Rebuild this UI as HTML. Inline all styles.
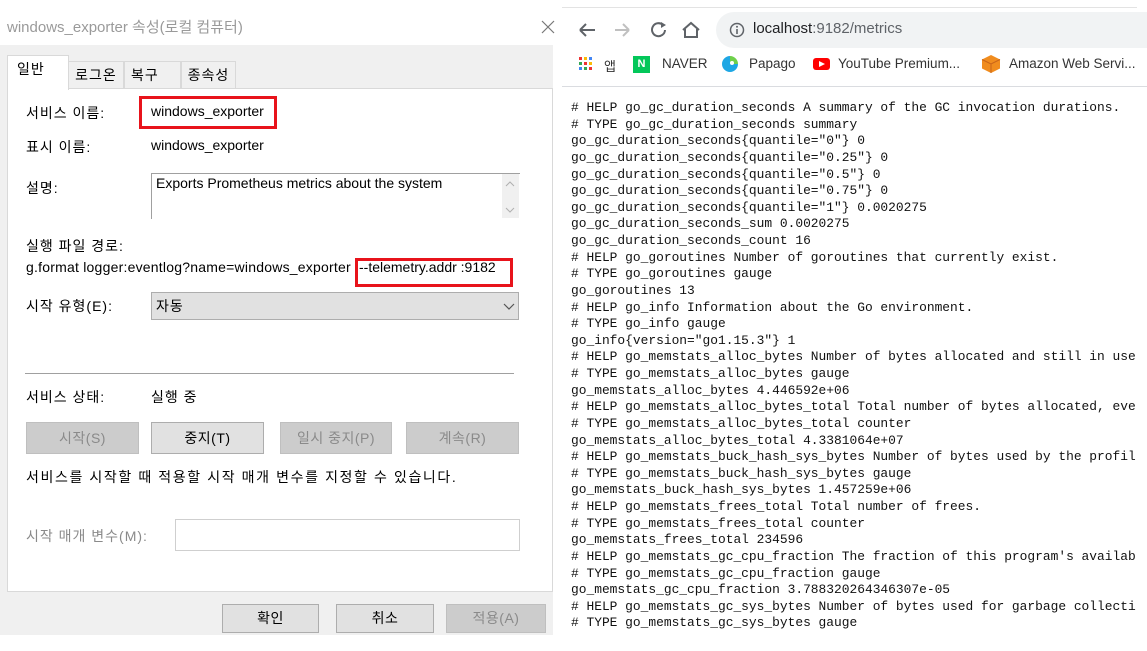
<!DOCTYPE html>
<html><head><meta charset="utf-8"><style>
*{margin:0;padding:0;box-sizing:border-box}
body{width:1147px;height:651px;background:#fff;position:relative;overflow:hidden;font-family:"Liberation Sans","Noto Sans CJK KR",sans-serif;font-size:14px;color:#000}
.a{position:absolute;white-space:nowrap}
.k{letter-spacing:1px}
.btn{position:absolute;height:32px;background:#e1e1e1;border:1px solid #adadad;text-align:center;line-height:30px;font-size:14px;letter-spacing:0.5px}
.dis{background:#cccccc;border-color:#bfbfbf;color:#8a8a8a}
.red{position:absolute;border:3px solid #e8131b}
pre{position:absolute;left:571px;top:100px;font-family:"Liberation Mono",monospace;font-size:12.9px;line-height:16.63px;color:#111}
</style></head><body>
<!-- dialog -->
<div class="a" style="left:0;top:0;width:553px;height:45px;background:#fff"></div>
<div class="a" style="left:7px;top:16px;font-size:15px;color:#9a9a9a">windows_exporter 속성(로컬 컴퓨터)</div>
<svg class="a" style="left:541px;top:20px" width="14" height="14"><path d="M1 1L13 13M13 1L1 13" stroke="#777" stroke-width="1.2"/></svg>
<div class="a" style="left:0;top:45px;width:553px;height:590px;background:#f0f0f0"></div>
<div class="a" style="left:7px;top:88px;width:546px;height:504px;background:#fff;border:1px solid #d9d9d9"></div>
<div class="a k" style="left:68px;top:61px;width:56px;height:28px;border:1px solid #d9d9d9;border-bottom:none;text-align:center;line-height:26px">로그온</div>
<div class="a k" style="left:124px;top:61px;width:57px;height:28px;border:1px solid #d9d9d9;border-bottom:none;padding-left:6px;line-height:26px">복구</div>
<div class="a k" style="left:181px;top:61px;width:55px;height:28px;border:1px solid #d9d9d9;border-bottom:none;text-align:center;line-height:26px">종속성</div>
<div class="a k" style="left:7px;top:55px;width:62px;height:35px;background:#fff;border:1px solid #d9d9d9;border-bottom:none;padding-left:9px;line-height:26px">일반</div>

<div class="a k" style="left:26px;top:103px">서비스 이름:</div>
<div class="a" style="left:151px;top:103px">windows_exporter</div>
<div class="red" style="left:139px;top:96px;width:138px;height:33px"></div>
<div class="a k" style="left:26px;top:137px">표시 이름:</div>
<div class="a" style="left:151px;top:137px">windows_exporter</div>
<div class="a k" style="left:26px;top:178px">설명:</div>
<div class="a" style="left:151px;top:173px;width:369px;height:46px;border:1px solid #a0a0a0;border-right:none;border-bottom:none;padding:1px 4px">Exports Prometheus metrics about the system</div>
<div class="a" style="left:502px;top:174px;width:17px;height:44px;background:#f0f0f0"></div>
<svg class="a" style="left:504px;top:180px" width="12" height="36"><path d="M2 6L6 2L10 6M2 28L6 32L10 28" stroke="#b0b0b0" fill="none"/></svg>
<div class="a k" style="left:26px;top:236px">실행 파일 경로:</div>
<div class="a" style="left:26px;top:259px;letter-spacing:0.22px">g.format logger:eventlog?name=windows_exporter</div>
<div class="a" style="left:359px;top:259px">--telemetry.addr :9182</div>
<div class="red" style="left:355px;top:258px;width:158px;height:29px"></div>
<div class="a k" style="left:26px;top:296px">시작 유형(E):</div>
<div class="a k" style="left:151px;top:292px;width:368px;height:28px;background:#e1e1e1;border:1px solid #adadad;padding:3px 4px">자동</div>
<svg class="a" style="left:503px;top:301px" width="12" height="10"><path d="M1 3L6 8L11 3" stroke="#555" fill="none" stroke-width="1.2"/></svg>
<div class="a" style="left:25px;top:373px;width:489px;height:1px;background:#a0a0a0"></div>
<div class="a k" style="left:26px;top:387px">서비스 상태:</div>
<div class="a k" style="left:151px;top:387px">실행 중</div>
<div class="btn dis" style="left:26px;top:422px;width:113px">시작(S)</div>
<div class="btn" style="left:151px;top:422px;width:113px">중지(T)</div>
<div class="btn dis" style="left:280px;top:422px;width:112px">일시 중지(P)</div>
<div class="btn dis" style="left:406px;top:422px;width:113px">계속(R)</div>
<div class="a" style="left:26px;top:467px;letter-spacing:1.6px">서비스를 시작할 때 적용할 시작 매개 변수를 지정할 수 있습니다.</div>
<div class="a k" style="left:26px;top:526px;color:#8a8a8a">시작 매개 변수(M):</div>
<div class="a" style="left:175px;top:519px;width:345px;height:32px;border:1px solid #cfcfcf;background:#fff"></div>
<div class="btn" style="left:222px;top:604px;width:97px;height:29px;line-height:27px">확인</div>
<div class="btn" style="left:336px;top:604px;width:98px;height:29px;line-height:27px">취소</div>
<div class="btn dis" style="left:446px;top:604px;width:100px;height:29px;line-height:27px">적용(A)</div>

<!-- browser -->
<div class="a" style="left:562px;top:7px;width:575px;height:1px;background:#e3e3e3"></div>
<svg class="a" style="left:577px;top:20px" width="140" height="20">
<path d="M3 10H18M3 10L9 4M3 10L9 16" stroke="#5f6368" stroke-width="2" fill="none"/>
<path d="M38 10H52M52 10L46 4M52 10L46 16" stroke="#c0c0c0" stroke-width="2" fill="none"/>
<path d="M86 5A6.5 6.5 0 1 0 88 10" stroke="#5f6368" stroke-width="2" fill="none"/><path d="M84 2L89 5L84 8Z" fill="#5f6368"/>
<path d="M106 10L114 3L122 10M108 9V17H120V9" stroke="#5f6368" stroke-width="2" fill="none"/>
</svg>
<div class="a" style="left:716px;top:12px;width:431px;height:36px;border-radius:18px 0 0 18px;background:#f1f3f4"></div>
<svg class="a" style="left:729px;top:22px" width="16" height="16"><circle cx="8" cy="8" r="6.5" stroke="#5f6368" stroke-width="1.5" fill="none"/><path d="M8 7V12" stroke="#5f6368" stroke-width="1.6"/><circle cx="8" cy="4.8" r="1" fill="#5f6368"/></svg>
<div class="a" style="left:753px;top:20px;font-size:15px;color:#202124">localhost<span style="color:#5f6368">:9182/metrics</span></div>
<svg class="a" style="left:578px;top:56px" width="16" height="16"><g fill="#e33"><rect x="1" y="1" width="3" height="3"/><rect x="6" y="1" width="3" height="3" fill="#fbbc05"/><rect x="11" y="1" width="3" height="3" fill="#4285f4"/><rect x="1" y="6" width="3" height="3" fill="#34a853"/><rect x="6" y="6" width="3" height="3"/><rect x="11" y="6" width="3" height="3" fill="#fbbc05"/><rect x="1" y="11" width="3" height="3" fill="#4285f4"/><rect x="6" y="11" width="3" height="3" fill="#34a853"/><rect x="11" y="11" width="3" height="3"/></g></svg>
<div class="a" style="left:604px;top:56px;font-size:13px;color:#333">앱</div>
<div class="a" style="left:633px;top:56px;width:17px;height:17px;background:#03c75a;color:#fff;font-weight:bold;font-size:11px;text-align:center;line-height:17px">N</div>
<div class="a" style="left:662px;top:56px;font-size:13.5px;color:#333">NAVER</div>
<svg class="a" style="left:721px;top:55px" width="18" height="18"><path d="M9 1A8 8 0 1 0 17 9L9 9Z" fill="#1ea7e4"/><path d="M9 9L17 9A8 8 0 0 0 9 1Z" fill="#6fd04b"/><circle cx="11" cy="8" r="2" fill="#fff"/></svg>
<div class="a" style="left:749px;top:56px;font-size:13.5px;color:#333">Papago</div>
<div class="a" style="left:813px;top:58px;width:17px;height:12px;border-radius:3px;background:#f00"></div>
<svg class="a" style="left:819px;top:61px" width="6" height="6"><path d="M0 0L6 3L0 6Z" fill="#fff"/></svg>
<div class="a" style="left:838px;top:56px;font-size:13.5px;color:#333">YouTube Premium...</div>
<svg class="a" style="left:981px;top:54px" width="20" height="20"><path d="M10 1L19 5.5V14.5L10 19L1 14.5V5.5Z" fill="#f08c1e"/><path d="M1 5.5L10 10L19 5.5M10 10V19" stroke="#c8641a" fill="none"/></svg>
<div class="a" style="left:1009px;top:56px;font-size:13.5px;color:#333">Amazon Web Servi...</div>
<div class="a" style="left:562px;top:86px;width:585px;height:1px;background:#dadce0"></div>
<pre># HELP go_gc_duration_seconds A summary of the GC invocation durations.
# TYPE go_gc_duration_seconds summary
go_gc_duration_seconds{quantile="0"} 0
go_gc_duration_seconds{quantile="0.25"} 0
go_gc_duration_seconds{quantile="0.5"} 0
go_gc_duration_seconds{quantile="0.75"} 0
go_gc_duration_seconds{quantile="1"} 0.0020275
go_gc_duration_seconds_sum 0.0020275
go_gc_duration_seconds_count 16
# HELP go_goroutines Number of goroutines that currently exist.
# TYPE go_goroutines gauge
go_goroutines 13
# HELP go_info Information about the Go environment.
# TYPE go_info gauge
go_info{version="go1.15.3"} 1
# HELP go_memstats_alloc_bytes Number of bytes allocated and still in use
# TYPE go_memstats_alloc_bytes gauge
go_memstats_alloc_bytes 4.446592e+06
# HELP go_memstats_alloc_bytes_total Total number of bytes allocated, eve
# TYPE go_memstats_alloc_bytes_total counter
go_memstats_alloc_bytes_total 4.3381064e+07
# HELP go_memstats_buck_hash_sys_bytes Number of bytes used by the profil
# TYPE go_memstats_buck_hash_sys_bytes gauge
go_memstats_buck_hash_sys_bytes 1.457259e+06
# HELP go_memstats_frees_total Total number of frees.
# TYPE go_memstats_frees_total counter
go_memstats_frees_total 234596
# HELP go_memstats_gc_cpu_fraction The fraction of this program's availab
# TYPE go_memstats_gc_cpu_fraction gauge
go_memstats_gc_cpu_fraction 3.788320264346307e-05
# HELP go_memstats_gc_sys_bytes Number of bytes used for garbage collecti
# TYPE go_memstats_gc_sys_bytes gauge</pre>
<div class="a" style="left:562px;top:636px;width:585px;height:15px;background:#fff"></div>
</body></html>
